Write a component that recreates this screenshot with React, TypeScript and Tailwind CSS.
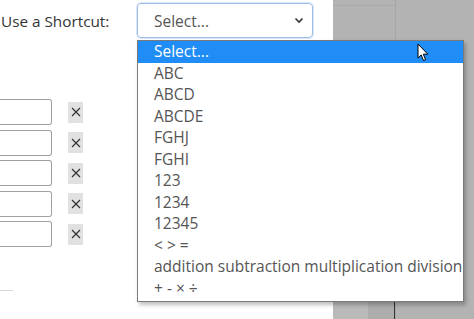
import React from "react";

const items = [
  "Select...",
  "ABC",
  "ABCD",
  "ABCDE",
  "FGHJ",
  "FGHI",
  "123",
  "1234",
  "12345",
  "< > =",
  "addition subtraction multiplication division",
  "+ - × ÷",
];

export default function App() {
  const font = { fontFamily: '"Open Sans", "Noto Sans", sans-serif' };
  return (
    <div
      className="relative w-[474px] h-[319px] overflow-hidden bg-white flex"
      style={font}
    >
      <div className="w-[333px] h-full flex flex-col pt-[3px]">
        <div className="flex items-center">
          <div className="w-[137px] text-[15.3px] text-[#333] pl-[1px] pt-[2px]">Use a Shortcut:</div>
          <div className="w-[176px] h-[35px] rounded-[4px] border border-[#9fbde6] shadow-[0_0_0_1px_#dbe7f7] flex items-center justify-between pl-[16px] pr-[8px] text-[15.5px] text-[#555]">
            <span className="pt-[2px]">Select...</span>
            <svg width="10" height="7" viewBox="0 0 10 7" fill="none">
              <path d="M1.5 1.5 L5 5 L8.5 1.5" stroke="#333" strokeWidth="1.6" />
            </svg>
          </div>
        </div>
        <div className="mt-[61px] flex flex-col gap-[4.5px]">
          {[0, 1, 2, 3, 4].map((i) => (
            <div key={i} className="flex items-center h-[26px]">
              <div className="w-[52px] h-[26px] border border-l-0 border-[#a0a0a0] rounded-r-[3px] bg-white" />
              <div className="ml-[16px] w-[15px] h-[21px] bg-[#e1e1e1] flex items-center justify-center">
                <svg width="10" height="10" viewBox="0 0 10 10">
                  <path d="M1 1 L9 9 M9 1 L1 9" stroke="#333" strokeWidth="1.2" />
                </svg>
              </div>
            </div>
          ))}
        </div>
        <div className="mt-[43px] w-[13px] h-px bg-[#d6d6d6]" />
      </div>
      <div className="flex-1 h-full bg-[#b3b3b3] flex">
        <div className="w-[62px] h-full flex flex-col">
          <div className="h-[5px]" />
          <div className="h-px bg-[#a9a9a9]" />
          <div className="flex-1" />
          <div className="h-[17px] flex">
            <div className="w-[35px] bg-[#bababa]" />
            <div className="flex-1 bg-[#adadad]" />
            <div className="w-px bg-[#333]" />
          </div>
        </div>
        <div className="w-px h-full bg-[#a6a6a6]" />
        <div className="flex-1" />
      </div>

      <div className="absolute left-[137px] top-[40px] w-[327px] h-[262px] bg-white border border-[#7a7a7a] shadow-[2px_3px_4px_rgba(0,0,0,0.25)] flex flex-col">
        {items.map((t, i) => (
          <div
            key={t}
            className={
              i === 0
                ? "h-[21.5px] flex items-center pl-[16px] text-[15.5px] bg-[#1f8df5] text-white"
                : "h-[21.5px] flex items-center pl-[16px] text-[15.5px] text-[#555] whitespace-nowrap"
            }
          >
            {t}
          </div>
        ))}
      </div>

      <svg
        className="absolute left-[417px] top-[43px]"
        width="12"
        height="19"
        viewBox="0 0 12 19"
      >
        <path
          d="M1 1 L1 15 L4.2 12 L6.5 17.5 L8.6 16.6 L6.3 11.2 L10.8 11.2 Z"
          fill="#fff"
          stroke="#000"
          strokeWidth="1"
          strokeLinejoin="round"
        />
      </svg>
    </div>
  );
}
